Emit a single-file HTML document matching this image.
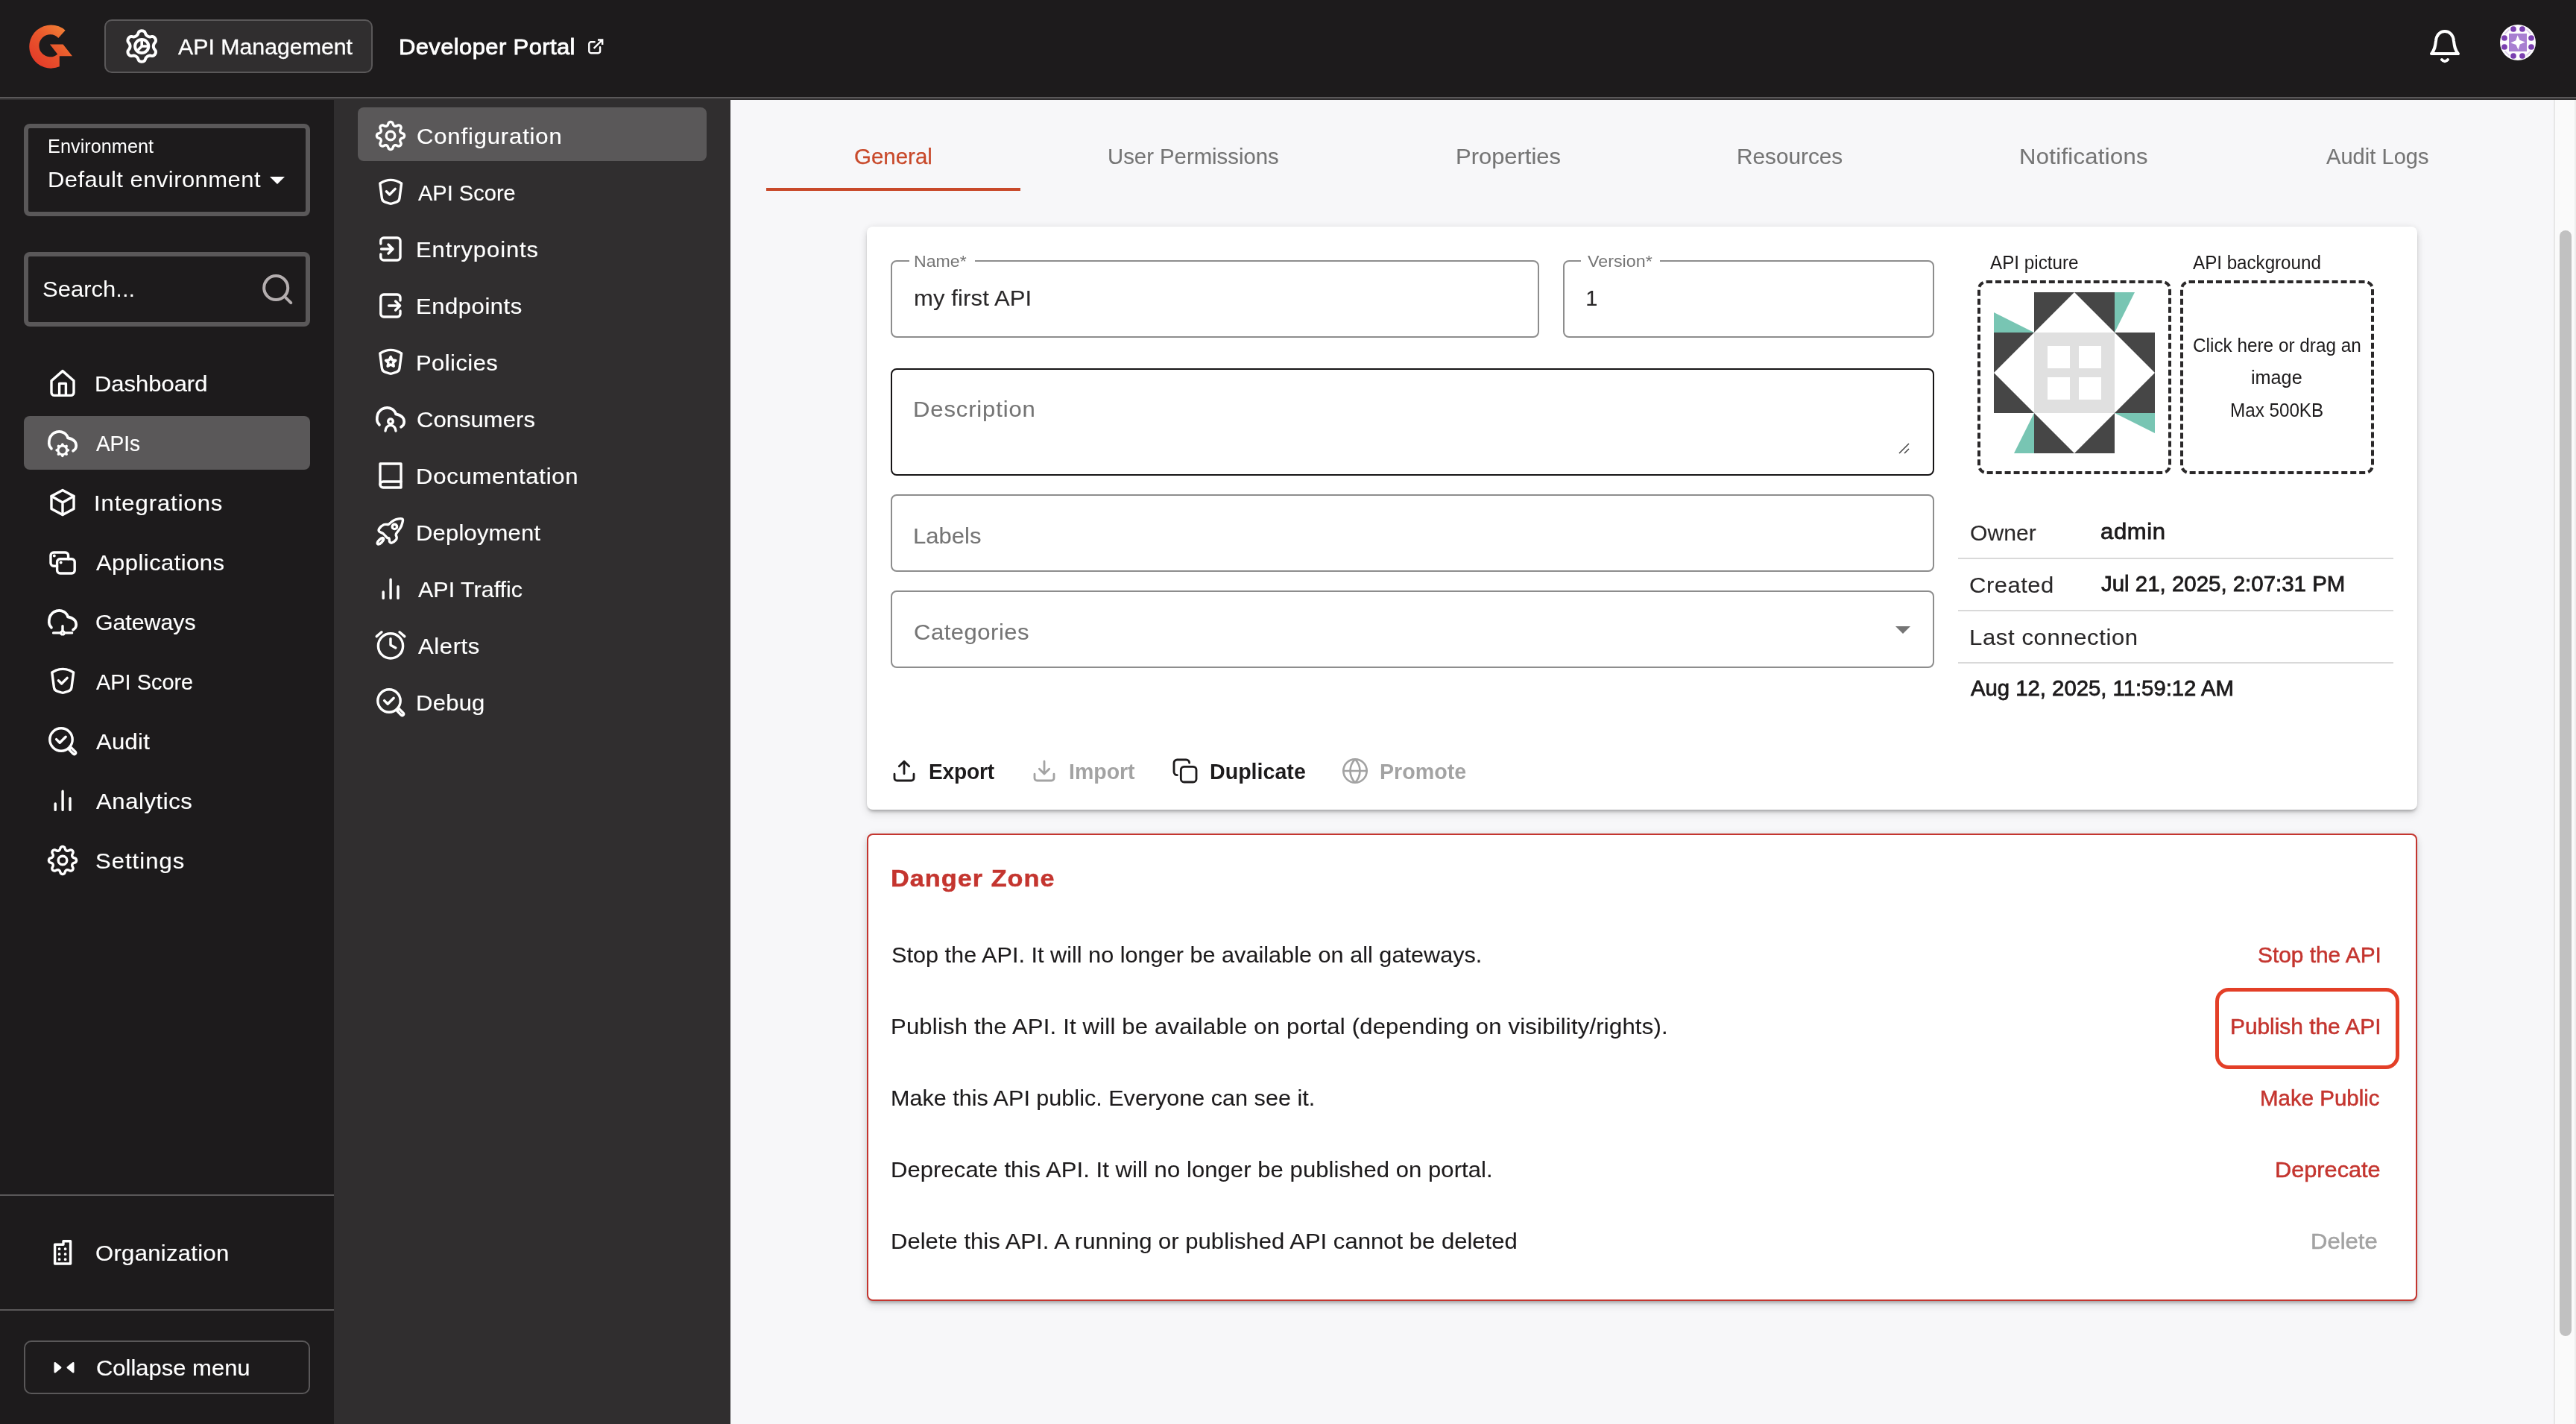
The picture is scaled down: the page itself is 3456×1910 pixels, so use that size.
<!DOCTYPE html>
<html lang="en">
<head>
<meta charset="utf-8">
<title>my first API - General - API Management</title>
<style>
html,body{margin:0;padding:0;}
@media (max-width:2000px){html{zoom:.5;}}
body{width:3456px;height:1910px;overflow:hidden;background:#f7f7f9;font-family:"Liberation Sans",sans-serif;position:relative;}
.abs,.t,.ic,.item,.box{position:absolute;}
.t{white-space:pre;display:block;transform-origin:0 0;}
header,nav.main,nav.sub,main{will-change:transform;}
.ic{display:block;overflow:visible;}
header{position:absolute;left:0;top:0;width:3456px;height:130px;background:#1d1b1c;border-bottom:2px solid #5a5859;box-shadow:0 2px 0 #302e2f;z-index:5;}
nav.main{position:absolute;left:0;top:134px;width:448px;height:1776px;background:#1d1b1c;}
nav.sub{position:absolute;left:448px;top:134px;width:532px;height:1776px;background:#302e2f;}
main{position:absolute;left:980px;top:134px;width:2446px;height:1776px;background:#f7f7f9;}
.item{height:72px;border-radius:8px;}
.item.sel{background:#5a5859;}
.apim{left:140px;top:26px;width:356px;height:68px;border:2px solid #5a5859;border-radius:10px;background:#302e2f;}
.env{left:32px;top:32px;width:372px;height:112px;border:6px solid #5a5859;border-radius:8px;}
.srch{left:32px;top:204px;width:372px;height:88px;border:6px solid #5a5859;border-radius:8px;}
.hr{position:absolute;left:0;width:448px;height:2px;background:#5a5859;}
.collapse{left:32px;top:1664px;width:380px;height:68px;border:2px solid #5a5859;border-radius:10px;}
.tri{position:absolute;width:0;height:0;border-left:10px solid transparent;border-right:10px solid transparent;border-top:10px solid #fff;}
.ink{position:absolute;left:48px;top:118px;width:341px;height:4px;background:#c8492a;}
.card{position:absolute;left:183px;top:170px;width:2080px;height:782px;background:#fff;border-radius:8px;box-shadow:0 4px 4px -2px rgba(0,0,0,.28),0 6px 12px 0 rgba(0,0,0,.10),0 0 10px 0 rgba(0,0,0,.07);}
.danger{position:absolute;left:183px;top:984px;width:2076px;height:623px;background:#fff;border:2px solid #c4352f;border-radius:8px;box-shadow:0 4px 4px -2px rgba(0,0,0,.28),0 6px 12px 0 rgba(0,0,0,.10),0 0 10px 0 rgba(0,0,0,.07);}
.fld{position:absolute;border:2px solid #8d8d8d;border-radius:8px;box-sizing:border-box;}
.fld.hov{border-color:#161415;}
.notch{position:absolute;top:-2px;height:2px;background:#fff;}
.drop{position:absolute;top:72px;width:252px;height:252px;border:4px dashed #2a2829;border-radius:12px;}
.line{position:absolute;left:1464px;width:584px;height:2px;background:#d9d9d9;}
.hl{position:absolute;left:1807px;top:205px;width:237px;height:99px;border:5px solid #e33f27;border-radius:18px;}
.sbar{position:absolute;left:3426px;top:134px;width:26px;height:1776px;background:#fafafa;border-left:2px solid #e7e7e7;border-right:2px solid #ededed;}
.thumb{position:absolute;left:6px;top:175px;width:16px;height:1483px;border-radius:8px;background:#c1c1c1;}
</style>
</head>
<body>
<header>
<svg class="abs" style="left:36px;top:28px" width="64" height="64" viewBox="36 28 64 64"><defs><linearGradient id="lg" gradientUnits="userSpaceOnUse" x1="48" y1="88" x2="92" y2="40"><stop offset="0" stop-color="#e43a29"/><stop offset="0.550" stop-color="#e9592c"/><stop offset="1" stop-color="#f28236"/></linearGradient></defs><path fill="url(#lg)" d="M87.600 40.700A29.100 29.100 0 1 0 79.800 89.300V75.300H97L84.600 59.400H66.900L77.240 72.640A15 15 0 1 1 78.300 51Z"/></svg>
<div class="box apim"></div>
<svg class="ic" style="left:166px;top:38px;color:#fff" width="48" height="48" viewBox="0 0 24 24" fill="none" stroke="currentColor" stroke-width="1.7" stroke-linecap="round" stroke-linejoin="round"><path d="M19.91 12.00L19.95 11.49L20.08 10.95L20.31 10.37L20.90 9.64L21.41 8.84L21.49 8.11L21.38 7.42L21.11 6.80L20.70 6.25L20.16 5.81L19.50 5.51L18.54 5.56L17.62 5.70L17.00 5.61L16.47 5.46L16.00 5.24L15.58 4.94L15.18 4.56L14.79 4.07L14.46 3.20L14.02 2.35L13.43 1.93L12.78 1.68L12.10 1.59L11.42 1.68L10.77 1.93L10.18 2.35L9.74 3.20L9.41 4.07L9.02 4.56L8.62 4.94L8.20 5.24L7.73 5.46L7.20 5.61L6.58 5.70L5.66 5.56L4.70 5.51L4.04 5.81L3.50 6.25L3.09 6.80L2.82 7.42L2.71 8.11L2.79 8.84L3.30 9.64L3.89 10.37L4.12 10.95L4.25 11.49L4.29 12.00L4.25 12.51L4.12 13.05L3.89 13.63L3.30 14.36L2.79 15.16L2.71 15.89L2.82 16.58L3.09 17.20L3.50 17.75L4.04 18.19L4.70 18.49L5.66 18.44L6.58 18.30L7.20 18.39L7.73 18.54L8.20 18.76L8.62 19.06L9.02 19.44L9.41 19.93L9.74 20.80L10.18 21.65L10.77 22.07L11.42 22.32L12.10 22.41L12.78 22.32L13.43 22.07L14.02 21.65L14.46 20.80L14.79 19.93L15.18 19.44L15.58 19.06L16.00 18.76L16.47 18.54L17.00 18.39L17.62 18.30L18.54 18.44L19.50 18.49L20.16 18.19L20.70 17.75L21.11 17.20L21.38 16.58L21.49 15.89L21.41 15.16L20.90 14.36L20.31 13.63L20.08 13.05L19.95 12.51Z" stroke-width="2"/><circle cx="12.1" cy="12" r="4.550" stroke-width="2"/><path d="M12.1 12V7.600M12.1 12H16.500M12.1 12L9 15.100" stroke-width="1.800"/></svg>
<svg class="abs" style="left:784px;top:46px" width="30" height="30" viewBox="784 46 30 30" fill="none" stroke="#fff" stroke-width="2.400"><path d="M797.700 56.300H792.900a2.600 2.600 0 0 0-2.600 2.600V68.600a2.600 2.600 0 0 0 2.600 2.600H802.500a2.600 2.600 0 0 0 2.600-2.600V63.200" stroke-linecap="round"/><path d="M796.700 64.800L808 53.500M802 53.500H808.200V59.900"/></svg>
<svg class="ic" style="left:3256px;top:38px;color:#fff" width="48" height="48" viewBox="0 0 24 24" fill="none" stroke="currentColor" stroke-width="1.7" stroke-linecap="round" stroke-linejoin="round"><path d="M3 17C5.200 14.600 5.600 12 6 8.500 6.300 4.600 8.600 2 12 2s5.700 2.600 6 6.500c.400 3.500.800 6.100 3 8.500z" stroke-width="2"/><path d="M10 21q2 2.300 4 0" stroke-width="2"/></svg>
<svg class="abs" style="left:3354px;top:33px" width="48" height="48" viewBox="0 0 48 48"><defs><clipPath id="avc"><circle cx="24" cy="24" r="24"/></clipPath></defs><g clip-path="url(#avc)"><rect width="48" height="48" fill="#fdfcfe"/><path d="M0 0L12 0 0 12zM48 0L36 0 48 12zM0 48L12 48 0 36zM48 48L36 48 48 36z" fill="#d6c3e6"/><path d="M6.500 12.500L12.500 6.500M35.500 6.500L41.500 12.500M6.500 35.500L12.500 41.500M35.500 41.500L41.500 35.500" stroke="#d9c8e8" stroke-width="1.600"/><rect x="12" y="12" width="24" height="24" fill="#a87fd1"/><path d="M23.600 14.200l2.900 6.600 7.300 2.800-7 3-2.300 7.200-3-6.700-7.200-2.700 7-3.200z" fill="#fff"/><g fill="#7a3fb0"><circle cx="18" cy="6" r="3.850"/><circle cx="30" cy="6" r="3.850"/><circle cx="18" cy="42" r="3.850"/><circle cx="30" cy="42" r="3.850"/><circle cx="6" cy="18" r="3.850"/><circle cx="6" cy="30" r="3.850"/><circle cx="42" cy="18" r="3.850"/><circle cx="42" cy="30" r="3.850"/></g></g></svg>
<span class="t" style="left:239.0px;top:48.5px;font-size:29px;line-height:29px;color:#fff;letter-spacing:-0.01px;transform:scaleX(1.045);-webkit-text-stroke:0.3px #fff;">API Management</span>
<span class="t" style="left:534.5px;top:48.5px;font-size:29px;line-height:29px;color:#fff;letter-spacing:0.33px;transform:scaleX(1.07);-webkit-text-stroke:0.8px #fff;">Developer Portal</span>
</header>
<nav class="main">
<div class="box env"></div><div class="tri" style="left:362px;top:103px"></div>
<div class="box srch"></div>
<svg class="abs" style="left:346px;top:228px" width="52" height="52" viewBox="346 228 52 52" fill="none" stroke="#b4aeaf" stroke-width="4" stroke-linecap="round"><circle cx="370.200" cy="252.100" r="16"/><path d="M381.700 263.600L390.300 272.200"/></svg>
<div class="item" style="left:32px;top:344px;width:384px"></div><svg class="ic" style="left:60px;top:356px;color:#fff" width="48" height="48" viewBox="0 0 24 24" fill="none" stroke="currentColor" stroke-width="1.7" stroke-linecap="round" stroke-linejoin="round"><path d="M4.500 10.400L12 3.800l7.500 6.600v7.800a2 2 0 01-2 2h-11a2 2 0 01-2-2z"/><path d="M9.800 20.200v-8h4.400v8"/></svg><div class="item sel" style="left:32px;top:424px;width:384px"></div><svg class="ic" style="left:60px;top:436px;color:#fff" width="48" height="48" viewBox="0 0 24 24" fill="none" stroke="currentColor" stroke-width="1.7" stroke-linecap="round" stroke-linejoin="round"><path d="M4.48 15.90C4.26 15.53 3.38 14.56 3.13 13.70C2.88 12.84 2.84 11.72 2.96 10.73C3.08 9.74 3.31 8.68 3.87 7.78C4.43 6.88 5.34 5.88 6.32 5.32C7.30 4.76 8.66 4.41 9.77 4.41C10.88 4.41 12.10 4.84 12.96 5.32C13.82 5.80 14.49 6.73 14.93 7.29C15.37 7.85 15.49 8.46 15.60 8.70" stroke-width="1.850"/><path d="M15.60 8.70C16.02 8.83 17.32 9.08 18.10 9.50C18.88 9.92 19.80 10.50 20.30 11.20C20.80 11.90 21.05 12.92 21.10 13.70C21.15 14.48 20.95 15.29 20.60 15.90C20.25 16.51 19.27 17.12 19.00 17.37" stroke-width="1.850"/><path d="M16.62 16.90L16.56 16.59L16.39 16.31L15.99 16.09L15.57 15.92L15.37 15.72L15.24 15.52L15.18 15.28L15.19 15.00L15.36 14.59L15.49 14.14L15.41 13.82L15.23 13.57L14.98 13.39L14.66 13.31L14.21 13.44L13.80 13.61L13.52 13.62L13.28 13.56L13.08 13.43L12.88 13.23L12.71 12.81L12.49 12.41L12.21 12.24L11.90 12.18L11.59 12.24L11.31 12.41L11.09 12.81L10.92 13.23L10.72 13.43L10.52 13.56L10.28 13.62L10.00 13.61L9.59 13.44L9.14 13.31L8.82 13.39L8.57 13.57L8.39 13.82L8.31 14.14L8.44 14.59L8.61 15.00L8.62 15.28L8.56 15.52L8.43 15.72L8.23 15.92L7.81 16.09L7.41 16.31L7.24 16.59L7.18 16.90L7.24 17.21L7.41 17.49L7.81 17.71L8.23 17.88L8.43 18.08L8.56 18.28L8.62 18.52L8.61 18.80L8.44 19.21L8.31 19.66L8.39 19.98L8.57 20.23L8.82 20.41L9.14 20.49L9.59 20.36L10.00 20.19L10.28 20.18L10.52 20.24L10.72 20.37L10.92 20.57L11.09 20.99L11.31 21.39L11.59 21.56L11.90 21.62L12.21 21.56L12.49 21.39L12.71 20.99L12.88 20.57L13.08 20.37L13.28 20.24L13.52 20.18L13.80 20.19L14.21 20.36L14.66 20.49L14.98 20.41L15.23 20.23L15.41 19.98L15.49 19.66L15.36 19.21L15.19 18.80L15.18 18.52L15.24 18.28L15.37 18.08L15.57 17.88L15.99 17.71L16.39 17.49L16.56 17.21ZM9.70 16.90a2.2 2.2 0 1 0 4.4 0a2.2 2.2 0 1 0 -4.4 0Z" fill="currentColor" fill-rule="evenodd" stroke="none"/></svg><div class="item" style="left:32px;top:504px;width:384px"></div><svg class="ic" style="left:60px;top:516px;color:#fff" width="48" height="48" viewBox="0 0 24 24" fill="none" stroke="currentColor" stroke-width="1.7" stroke-linecap="round" stroke-linejoin="round"><path d="M12 3.700l7.500 4.100v8.400L12 20.300l-7.500-4.100V7.800z"/><path d="M4.500 7.800L12 12l7.500-4.200M12 12v8.300"/></svg><div class="item" style="left:32px;top:584px;width:384px"></div><svg class="ic" style="left:60px;top:596px;color:#fff" width="48" height="48" viewBox="0 0 24 24" fill="none" stroke="currentColor" stroke-width="1.7" stroke-linecap="round" stroke-linejoin="round"><path d="M8.300 14.600H6a2 2 0 01-2-2V7.500a2 2 0 012-2h7.800a2 2 0 012 2v2.400"/><rect x="8.300" y="9.900" width="11.800" height="9.600" rx="2"/><path d="M6.400 7.800h.01M10.800 12.300h.01" stroke-width="2"/></svg><div class="item" style="left:32px;top:664px;width:384px"></div><svg class="ic" style="left:60px;top:676px;color:#fff" width="48" height="48" viewBox="0 0 24 24" fill="none" stroke="currentColor" stroke-width="1.7" stroke-linecap="round" stroke-linejoin="round"><path d="M4.48 15.90C4.26 15.53 3.38 14.56 3.13 13.70C2.88 12.84 2.84 11.72 2.96 10.73C3.08 9.74 3.31 8.68 3.87 7.78C4.43 6.88 5.34 5.88 6.32 5.32C7.30 4.76 8.66 4.41 9.77 4.41C10.88 4.41 12.10 4.84 12.96 5.32C13.82 5.80 14.49 6.73 14.93 7.29C15.37 7.85 15.49 8.46 15.60 8.70" stroke-width="1.850"/><path d="M15.60 8.70C16.02 8.83 17.32 9.08 18.10 9.50C18.88 9.92 19.80 10.50 20.30 11.20C20.80 11.90 21.05 12.92 21.10 13.70C21.15 14.48 20.95 15.29 20.60 15.90C20.25 16.51 19.27 17.12 19.00 17.37" stroke-width="1.850"/><path d="M12 14.800V18.300M5.800 19.450H10.800M13.200 19.450H18.300" stroke-width="1.700"/><circle cx="12" cy="19.450" r="1.100" stroke-width="1.500"/></svg><div class="item" style="left:32px;top:744px;width:384px"></div><svg class="ic" style="left:60px;top:756px;color:#fff" width="48" height="48" viewBox="0 0 24 24" fill="none" stroke="currentColor" stroke-width="1.7" stroke-linecap="round" stroke-linejoin="round"><path d="M4.900 6Q12.100 1.400 19.300 6L18 16Q17.700 18 15.800 18.600L12.900 19.500Q12.100 19.750 11.300 19.500L8.400 18.600Q6.500 18 6.200 16Z"/><path d="M9.200 11.400l2.100 2.100 3.800-3.800"/></svg><div class="item" style="left:32px;top:824px;width:384px"></div><svg class="ic" style="left:60px;top:836px;color:#fff" width="48" height="48" viewBox="0 0 24 24" fill="none" stroke="currentColor" stroke-width="1.7" stroke-linecap="round" stroke-linejoin="round"><circle cx="11" cy="11" r="7.600"/><path d="M7.800 10.800l2.300 2.300 4-4"/><path d="M16.300 17.700l1.400-1.400 2.900 2.900a1 1 0 01-1.400 1.400z"/></svg><div class="item" style="left:32px;top:904px;width:384px"></div><svg class="ic" style="left:60px;top:916px;color:#fff" width="48" height="48" viewBox="0 0 24 24" fill="none" stroke="currentColor" stroke-width="1.7" stroke-linecap="round" stroke-linejoin="round"><path d="M7.100 18.200v-4.200M12.050 18.200V5.600M17 18.200v-7.800" stroke-width="1.700"/></svg><div class="item" style="left:32px;top:984px;width:384px"></div><svg class="ic" style="left:60px;top:996px;color:#fff" width="48" height="48" viewBox="0 0 24 24" fill="none" stroke="currentColor" stroke-width="1.7" stroke-linecap="round" stroke-linejoin="round"><circle cx="12" cy="12" r="2.900"/><path d="M21.29 12.00L21.22 11.55L21.03 11.11L20.69 10.71L19.98 10.41L19.27 10.18L18.89 9.91L18.63 9.63L18.46 9.33L18.37 8.99L18.35 8.60L18.43 8.15L18.77 7.48L19.06 6.77L19.01 6.24L18.84 5.80L18.57 5.43L18.20 5.16L17.76 4.99L17.23 4.94L16.52 5.23L15.85 5.57L15.40 5.65L15.01 5.63L14.67 5.54L14.37 5.37L14.09 5.11L13.82 4.73L13.59 4.02L13.29 3.31L12.89 2.97L12.45 2.78L12.00 2.71L11.55 2.78L11.11 2.97L10.71 3.31L10.41 4.02L10.18 4.73L9.91 5.11L9.63 5.37L9.33 5.54L8.99 5.63L8.60 5.65L8.15 5.57L7.48 5.23L6.77 4.94L6.24 4.99L5.80 5.16L5.43 5.43L5.16 5.80L4.99 6.24L4.94 6.77L5.23 7.48L5.57 8.15L5.65 8.60L5.63 8.99L5.54 9.33L5.37 9.63L5.11 9.91L4.73 10.18L4.02 10.41L3.31 10.71L2.97 11.11L2.78 11.55L2.71 12.00L2.78 12.45L2.97 12.89L3.31 13.29L4.02 13.59L4.73 13.82L5.11 14.09L5.37 14.37L5.54 14.67L5.63 15.01L5.65 15.40L5.57 15.85L5.23 16.52L4.94 17.23L4.99 17.76L5.16 18.20L5.43 18.57L5.80 18.84L6.24 19.01L6.77 19.06L7.48 18.77L8.15 18.43L8.60 18.35L8.99 18.37L9.33 18.46L9.63 18.63L9.91 18.89L10.18 19.27L10.41 19.98L10.71 20.69L11.11 21.03L11.55 21.22L12.00 21.29L12.45 21.22L12.89 21.03L13.29 20.69L13.59 19.98L13.82 19.27L14.09 18.89L14.37 18.63L14.67 18.46L15.01 18.37L15.40 18.35L15.85 18.43L16.52 18.77L17.23 19.06L17.76 19.01L18.20 18.84L18.57 18.57L18.84 18.20L19.01 17.76L19.06 17.23L18.77 16.52L18.43 15.85L18.35 15.40L18.37 15.01L18.46 14.67L18.63 14.37L18.89 14.09L19.27 13.82L19.98 13.59L20.69 13.29L21.03 12.89L21.22 12.45Z"/></svg>
<div class="hr" style="top:1468px"></div>
<svg class="ic" style="left:60px;top:1523px;color:#fff" width="48" height="48" viewBox="0 0 24 24" fill="none" stroke="currentColor" stroke-width="1.7" stroke-linecap="round" stroke-linejoin="round"><path d="M6.800 19V6.100h5.700V3.900h4.800V19z"/><path d="M9.800 9.100h.01M13.800 9.100h.01M9.800 12.600h.01M13.800 12.600h.01M9.800 16.100h.01M13.800 16.100h.01" stroke-width="1.900"/></svg>
<div class="hr" style="top:1622px"></div>
<div class="box collapse"></div>
<svg class="ic" style="left:62px;top:1676px;color:#fff" width="48" height="48" viewBox="0 0 24 24" fill="none" stroke="currentColor" stroke-width="1.7" stroke-linecap="round" stroke-linejoin="round"><path d="M5.900 9.100l3.700 3-3.700 3zM18.100 9.100l-3.700 3 3.700 3z" fill="currentColor" stroke-width="1.300"/></svg>
<span class="t" style="left:64.0px;top:49.8px;font-size:25px;line-height:25px;color:#fff;letter-spacing:0.01px;transform:scaleX(1.012);">Environment</span>
<span class="t" style="left:63.5px;top:92.5px;font-size:29px;line-height:29px;color:#fff;letter-spacing:0.41px;transform:scaleX(1.07);">Default environment</span>
<span class="t" style="left:56.6px;top:240.2px;font-size:29px;line-height:29px;color:#fff;letter-spacing:0.01px;transform:scaleX(1.069);">Search...</span>
<span class="t" style="left:126.5px;top:366.5px;font-size:29px;line-height:29px;color:#fff;transform:scaleX(1.067);-webkit-text-stroke:0.15px #fff;">Dashboard</span>
<span class="t" style="left:129.0px;top:446.5px;font-size:29px;line-height:29px;color:#fff;letter-spacing:-0.15px;transform:scaleX(0.97);-webkit-text-stroke:0.15px #fff;">APIs</span>
<span class="t" style="left:126.2px;top:526.5px;font-size:29px;line-height:29px;color:#fff;letter-spacing:0.87px;transform:scaleX(1.07);-webkit-text-stroke:0.15px #fff;">Integrations</span>
<span class="t" style="left:129.0px;top:606.5px;font-size:29px;line-height:29px;color:#fff;letter-spacing:0.4px;transform:scaleX(1.07);-webkit-text-stroke:0.15px #fff;">Applications</span>
<span class="t" style="left:127.5px;top:686.5px;font-size:29px;line-height:29px;color:#fff;letter-spacing:-0.01px;transform:scaleX(1.044);-webkit-text-stroke:0.15px #fff;">Gateways</span>
<span class="t" style="left:129.0px;top:766.5px;font-size:29px;line-height:29px;color:#fff;transform:scaleX(0.997);-webkit-text-stroke:0.15px #fff;">API Score</span>
<span class="t" style="left:129.0px;top:846.5px;font-size:29px;line-height:29px;color:#fff;letter-spacing:0.26px;transform:scaleX(1.07);-webkit-text-stroke:0.15px #fff;">Audit</span>
<span class="t" style="left:129.0px;top:926.5px;font-size:29px;line-height:29px;color:#fff;letter-spacing:0.55px;transform:scaleX(1.07);-webkit-text-stroke:0.15px #fff;">Analytics</span>
<span class="t" style="left:127.6px;top:1006.5px;font-size:29px;line-height:29px;color:#fff;letter-spacing:0.95px;transform:scaleX(1.07);-webkit-text-stroke:0.15px #fff;">Settings</span>
<span class="t" style="left:127.6px;top:1532.5px;font-size:29px;line-height:29px;color:#fff;letter-spacing:0.28px;transform:scaleX(1.07);-webkit-text-stroke:0.15px #fff;">Organization</span>
<span class="t" style="left:128.5px;top:1686.5px;font-size:29px;line-height:29px;color:#fff;transform:scaleX(1.068);-webkit-text-stroke:0.15px #fff;">Collapse menu</span>
</nav>
<nav class="sub">
<div class="item sel" style="left:32px;top:10px;width:468px"></div><svg class="ic" style="left:52px;top:24px;color:#fff" width="48" height="48" viewBox="0 0 24 24" fill="none" stroke="currentColor" stroke-width="1.7" stroke-linecap="round" stroke-linejoin="round"><circle cx="12" cy="12" r="2.900"/><path d="M21.29 12.00L21.22 11.55L21.03 11.11L20.69 10.71L19.98 10.41L19.27 10.18L18.89 9.91L18.63 9.63L18.46 9.33L18.37 8.99L18.35 8.60L18.43 8.15L18.77 7.48L19.06 6.77L19.01 6.24L18.84 5.80L18.57 5.43L18.20 5.16L17.76 4.99L17.23 4.94L16.52 5.23L15.85 5.57L15.40 5.65L15.01 5.63L14.67 5.54L14.37 5.37L14.09 5.11L13.82 4.73L13.59 4.02L13.29 3.31L12.89 2.97L12.45 2.78L12.00 2.71L11.55 2.78L11.11 2.97L10.71 3.31L10.41 4.02L10.18 4.73L9.91 5.11L9.63 5.37L9.33 5.54L8.99 5.63L8.60 5.65L8.15 5.57L7.48 5.23L6.77 4.94L6.24 4.99L5.80 5.16L5.43 5.43L5.16 5.80L4.99 6.24L4.94 6.77L5.23 7.48L5.57 8.15L5.65 8.60L5.63 8.99L5.54 9.33L5.37 9.63L5.11 9.91L4.73 10.18L4.02 10.41L3.31 10.71L2.97 11.11L2.78 11.55L2.71 12.00L2.78 12.45L2.97 12.89L3.31 13.29L4.02 13.59L4.73 13.82L5.11 14.09L5.37 14.37L5.54 14.67L5.63 15.01L5.65 15.40L5.57 15.85L5.23 16.52L4.94 17.23L4.99 17.76L5.16 18.20L5.43 18.57L5.80 18.84L6.24 19.01L6.77 19.06L7.48 18.77L8.15 18.43L8.60 18.35L8.99 18.37L9.33 18.46L9.63 18.63L9.91 18.89L10.18 19.27L10.41 19.98L10.71 20.69L11.11 21.03L11.55 21.22L12.00 21.29L12.45 21.22L12.89 21.03L13.29 20.69L13.59 19.98L13.82 19.27L14.09 18.89L14.37 18.63L14.67 18.46L15.01 18.37L15.40 18.35L15.85 18.43L16.52 18.77L17.23 19.06L17.76 19.01L18.20 18.84L18.57 18.57L18.84 18.20L19.01 17.76L19.06 17.23L18.77 16.52L18.43 15.85L18.35 15.40L18.37 15.01L18.46 14.67L18.63 14.37L18.89 14.09L19.27 13.82L19.98 13.59L20.69 13.29L21.03 12.89L21.22 12.45Z"/></svg><div class="item" style="left:32px;top:86px;width:468px"></div><svg class="ic" style="left:52px;top:100px;color:#fff" width="48" height="48" viewBox="0 0 24 24" fill="none" stroke="currentColor" stroke-width="1.7" stroke-linecap="round" stroke-linejoin="round"><path d="M4.900 6Q12.100 1.400 19.300 6L18 16Q17.700 18 15.800 18.600L12.900 19.500Q12.100 19.750 11.300 19.500L8.400 18.600Q6.500 18 6.200 16Z"/><path d="M9.200 11.400l2.100 2.100 3.800-3.800"/></svg><div class="item" style="left:32px;top:162px;width:468px"></div><svg class="ic" style="left:52px;top:176px;color:#fff" width="48" height="48" viewBox="0 0 24 24" fill="none" stroke="currentColor" stroke-width="1.7" stroke-linecap="round" stroke-linejoin="round"><path d="M5.400 8.500V6.500a2 2 0 012-2h9.100a2 2 0 012 2v11a2 2 0 01-2 2H7.400a2 2 0 01-2-2v-2"/><path d="M5.800 12h7.700m-3-3l3 3-3 3"/></svg><div class="item" style="left:32px;top:238px;width:468px"></div><svg class="ic" style="left:52px;top:252px;color:#fff" width="48" height="48" viewBox="0 0 24 24" fill="none" stroke="currentColor" stroke-width="1.7" stroke-linecap="round" stroke-linejoin="round"><path d="M18.500 8.500V6.500a2 2 0 00-2-2H7.400a2 2 0 00-2 2v11a2 2 0 002 2h9.100a2 2 0 002-2v-2"/><path d="M10.800 12h7.500m-3-3l3 3-3 3"/></svg><div class="item" style="left:32px;top:314px;width:468px"></div><svg class="ic" style="left:52px;top:328px;color:#fff" width="48" height="48" viewBox="0 0 24 24" fill="none" stroke="currentColor" stroke-width="1.7" stroke-linecap="round" stroke-linejoin="round"><path d="M4.900 6Q12.100 1.400 19.300 6L18 16Q17.700 18 15.800 18.600L12.900 19.500Q12.100 19.750 11.300 19.500L8.400 18.600Q6.500 18 6.200 16Z"/><path d="M12.100 8.300l1 2.100 2.300.300-1.700 1.600.450 2.300-2.050-1.150-2.050 1.150.450-2.300-1.700-1.600 2.300-.300z"/></svg><div class="item" style="left:32px;top:390px;width:468px"></div><svg class="ic" style="left:52px;top:404px;color:#fff" width="48" height="48" viewBox="0 0 24 24" fill="none" stroke="currentColor" stroke-width="1.7" stroke-linecap="round" stroke-linejoin="round"><path d="M4.48 15.90C4.26 15.53 3.38 14.56 3.13 13.70C2.88 12.84 2.84 11.72 2.96 10.73C3.08 9.74 3.31 8.68 3.87 7.78C4.43 6.88 5.34 5.88 6.32 5.32C7.30 4.76 8.66 4.41 9.77 4.41C10.88 4.41 12.10 4.84 12.96 5.32C13.82 5.80 14.49 6.73 14.93 7.29C15.37 7.85 15.49 8.46 15.60 8.70" stroke-width="1.850"/><path d="M15.60 8.70C16.02 8.83 17.32 9.08 18.10 9.50C18.88 9.92 19.80 10.50 20.30 11.20C20.80 11.90 21.05 12.92 21.10 13.70C21.15 14.48 20.95 15.29 20.60 15.90C20.25 16.51 19.27 17.12 19.00 17.37" stroke-width="1.850"/><circle cx="12" cy="13.600" r="1.650" stroke-width="1.700"/><path d="M8.500 20A3.500 3.800 0 0 1 15.500 20" stroke-width="1.700"/></svg><div class="item" style="left:32px;top:466px;width:468px"></div><svg class="ic" style="left:52px;top:480px;color:#fff" width="48" height="48" viewBox="0 0 24 24" fill="none" stroke="currentColor" stroke-width="1.7" stroke-linecap="round" stroke-linejoin="round"><path d="M5 4h14v16H7a2 2 0 01-2-2z"/><path d="M5 18a2 2 0 012-2h12"/></svg><div class="item" style="left:32px;top:542px;width:468px"></div><svg class="ic" style="left:52px;top:556px;color:#fff" width="48" height="48" viewBox="0 0 24 24" fill="none" stroke="currentColor" stroke-width="1.7" stroke-linecap="round" stroke-linejoin="round"><path d="M20.00 3.10C19.32 2.67 16.91 3.00 15.70 3.30C14.49 3.60 13.60 4.34 12.75 4.90C11.90 5.46 11.48 6.33 10.60 6.65C9.72 6.98 8.47 6.39 7.45 6.85C6.43 7.31 5.03 8.64 4.50 9.40C3.98 10.16 3.94 10.88 4.30 11.40C4.66 11.93 6.06 12.17 6.65 12.55C7.24 12.93 7.32 13.17 7.85 13.70C8.38 14.22 9.28 15.30 9.80 15.70C10.33 16.10 10.73 15.65 11.00 16.10C11.27 16.55 11.08 17.92 11.40 18.40C11.72 18.88 12.23 19.25 12.95 19.00C13.67 18.75 15.17 17.52 15.70 16.90C16.23 16.28 16.10 15.93 16.10 15.30C16.10 14.67 15.28 14.15 15.70 13.10C16.12 12.05 17.92 10.20 18.60 9.00C19.28 7.80 19.57 6.88 19.80 5.90C20.03 4.92 20.68 3.53 20.00 3.10Z"/><circle cx="14.700" cy="8.200" r="1.600"/><ellipse cx="5.200" cy="17.900" rx="2.700" ry="1.150" transform="rotate(-45 5.200 17.900)"/></svg><div class="item" style="left:32px;top:618px;width:468px"></div><svg class="ic" style="left:52px;top:632px;color:#fff" width="48" height="48" viewBox="0 0 24 24" fill="none" stroke="currentColor" stroke-width="1.7" stroke-linecap="round" stroke-linejoin="round"><path d="M7.100 18.200v-4.200M12.050 18.200V5.600M17 18.200v-7.800" stroke-width="1.700"/></svg><div class="item" style="left:32px;top:694px;width:468px"></div><svg class="ic" style="left:52px;top:708px;color:#fff" width="48" height="48" viewBox="0 0 24 24" fill="none" stroke="currentColor" stroke-width="1.7" stroke-linecap="round" stroke-linejoin="round"><circle cx="12" cy="12.200" r="8.300"/><path d="M12 7.400v4.200l3.400 1.900"/><path d="M2.600 5.800L6 2.900M21.400 5.800L18 2.900"/></svg><div class="item" style="left:32px;top:770px;width:468px"></div><svg class="ic" style="left:52px;top:784px;color:#fff" width="48" height="48" viewBox="0 0 24 24" fill="none" stroke="currentColor" stroke-width="1.7" stroke-linecap="round" stroke-linejoin="round"><circle cx="11" cy="11" r="7.600"/><path d="M7.800 10.800l2.300 2.300 4-4"/><path d="M16.300 17.700l1.400-1.400 2.900 2.900a1 1 0 01-1.400 1.400z"/></svg>
<span class="t" style="left:110.9px;top:34.5px;font-size:29px;line-height:29px;color:#fff;letter-spacing:0.79px;transform:scaleX(1.07);-webkit-text-stroke:0.15px #fff;">Configuration</span>
<span class="t" style="left:112.5px;top:110.5px;font-size:29px;line-height:29px;color:#fff;transform:scaleX(1.001);-webkit-text-stroke:0.15px #fff;">API Score</span>
<span class="t" style="left:110.0px;top:186.5px;font-size:29px;line-height:29px;color:#fff;letter-spacing:0.83px;transform:scaleX(1.07);-webkit-text-stroke:0.15px #fff;">Entrypoints</span>
<span class="t" style="left:110.0px;top:262.5px;font-size:29px;line-height:29px;color:#fff;letter-spacing:0.5px;transform:scaleX(1.07);-webkit-text-stroke:0.15px #fff;">Endpoints</span>
<span class="t" style="left:110.0px;top:338.5px;font-size:29px;line-height:29px;color:#fff;letter-spacing:0.39px;transform:scaleX(1.07);-webkit-text-stroke:0.15px #fff;">Policies</span>
<span class="t" style="left:110.9px;top:414.5px;font-size:29px;line-height:29px;color:#fff;letter-spacing:0.03px;transform:scaleX(1.07);-webkit-text-stroke:0.15px #fff;">Consumers</span>
<span class="t" style="left:110.0px;top:490.5px;font-size:29px;line-height:29px;color:#fff;letter-spacing:0.69px;transform:scaleX(1.07);-webkit-text-stroke:0.15px #fff;">Documentation</span>
<span class="t" style="left:110.0px;top:566.5px;font-size:29px;line-height:29px;color:#fff;letter-spacing:0.15px;transform:scaleX(1.07);-webkit-text-stroke:0.15px #fff;">Deployment</span>
<span class="t" style="left:112.5px;top:642.5px;font-size:29px;line-height:29px;color:#fff;transform:scaleX(1.051);-webkit-text-stroke:0.15px #fff;">API Traffic</span>
<span class="t" style="left:112.5px;top:718.5px;font-size:29px;line-height:29px;color:#fff;letter-spacing:0.56px;transform:scaleX(1.07);-webkit-text-stroke:0.15px #fff;">Alerts</span>
<span class="t" style="left:110.0px;top:794.5px;font-size:29px;line-height:29px;color:#fff;letter-spacing:0.22px;transform:scaleX(1.07);-webkit-text-stroke:0.15px #fff;">Debug</span>
</nav>
<main>
<div class="ink"></div>
<span class="t" style="left:166.0px;top:61.5px;font-size:29px;line-height:29px;color:#c8492a;transform:scaleX(1.016);-webkit-text-stroke:0.25px #c8492a;">General</span>
<span class="t" style="left:506.3px;top:61.5px;font-size:29px;line-height:29px;color:#757575;transform:scaleX(1.011);-webkit-text-stroke:0.1px #757575;">User Permissions</span>
<span class="t" style="left:972.5px;top:61.5px;font-size:29px;line-height:29px;color:#757575;transform:scaleX(1.067);-webkit-text-stroke:0.1px #757575;">Properties</span>
<span class="t" style="left:1349.6px;top:61.5px;font-size:29px;line-height:29px;color:#757575;transform:scaleX(1.026);-webkit-text-stroke:0.1px #757575;">Resources</span>
<span class="t" style="left:1728.5px;top:61.5px;font-size:29px;line-height:29px;color:#757575;letter-spacing:0.28px;transform:scaleX(1.07);-webkit-text-stroke:0.1px #757575;">Notifications</span>
<span class="t" style="left:2141.0px;top:61.5px;font-size:29px;line-height:29px;color:#757575;letter-spacing:0.01px;transform:scaleX(1.003);-webkit-text-stroke:0.1px #757575;">Audit Logs</span>
<section class="card">
<div class="fld" style="left:32px;top:45px;width:870px;height:104px"><div class="notch" style="left:23px;width:88px"></div></div>
<div class="fld" style="left:934px;top:45px;width:498px;height:104px"><div class="notch" style="left:22px;width:106px"></div></div>
<div class="fld hov" style="left:32px;top:190px;width:1400px;height:144px"></div>
<svg class="abs" style="left:1384px;top:290px" width="16" height="16" viewBox="0 0 16 16" stroke="#444" stroke-width="1.500" fill="none"><path d="M1 14L14 1M8 14L14 8"/></svg>
<div class="fld" style="left:32px;top:359px;width:1400px;height:104px"></div>
<div class="fld" style="left:32px;top:488px;width:1400px;height:104px"></div>
<div class="tri" style="left:1380px;top:536px;border-top-color:#757575"></div>
<div class="drop" style="left:1490px"></div>
<svg class="abs" style="left:1512px;top:88px" width="216" height="216" viewBox="0 0 216 216"><g fill="#464646"><rect x="54" y="0" width="108" height="54"/><rect x="54" y="162" width="108" height="54"/><rect x="0" y="54" width="54" height="108"/><rect x="162" y="54" width="54" height="108"/></g><path d="M108 0L216 108 108 216 0 108z" fill="#fff"/><rect x="54" y="54" width="108" height="108" fill="#e0e0e0"/><g fill="#fff"><rect x="72" y="72" width="30" height="30"/><rect x="114" y="72" width="30" height="30"/><rect x="72" y="114" width="30" height="30"/><rect x="114" y="114" width="30" height="30"/></g><g fill="#78c5b3"><path d="M162 0h27L162 54z"/><path d="M216 162v27L162 162z"/><path d="M54 216H27L54 162z"/><path d="M0 54V27L54 54z"/></g></svg>
<div class="drop" style="left:1762px"></div>
<div class="line" style="top:444px"></div>
<div class="line" style="top:514px"></div>
<div class="line" style="top:584px"></div>
<svg class="ic" style="left:29.75px;top:709.75px;color:#1d1b1c" width="40" height="40" viewBox="0 0 24 24" fill="none" stroke="currentColor" stroke-width="1.7" stroke-linecap="round" stroke-linejoin="round"><path d="M4.200 14.500v3.300a2 2 0 002 2h11.600a2 2 0 002-2v-3.300"/><path d="M12 14.300V4.400M8 8.300l4-4 4 4"/></svg>
<svg class="ic" style="left:217.75px;top:709.75px;color:#a3a3a3" width="40" height="40" viewBox="0 0 24 24" fill="none" stroke="currentColor" stroke-width="1.7" stroke-linecap="round" stroke-linejoin="round"><path d="M4.200 14.500v3.300a2 2 0 002 2h11.600a2 2 0 002-2v-3.300"/><path d="M12 4.300v10M8 10.400l4 4 4-4"/></svg>
<svg class="ic" style="left:406.5px;top:709.75px;color:#1d1b1c" width="40" height="40" viewBox="0 0 24 24" fill="none" stroke="currentColor" stroke-width="1.7" stroke-linecap="round" stroke-linejoin="round"><rect x="8.600" y="8.600" width="12.400" height="12.400" rx="2.600"/><path d="M15.400 5.600A2.600 2.600 0 0012.800 3H5.600A2.600 2.600 0 003 5.600v7.200a2.600 2.600 0 002.600 2.600"/></svg>
<svg class="ic" style="left:635px;top:710px;color:#a3a3a3" width="40" height="40" viewBox="0 0 24 24" fill="none" stroke="currentColor" stroke-width="1.6" stroke-linecap="round" stroke-linejoin="round"><circle cx="12" cy="12" r="9.400"/><path d="M2.600 12h18.800M12 2.600c2.600 2.600 3.900 5.900 3.900 9.400s-1.300 6.800-3.900 9.400c-2.600-2.600-3.900-5.900-3.900-9.400S9.400 5.200 12 2.600z"/></svg>
<span class="t" style="left:62.7px;top:36.4px;font-size:22px;line-height:22px;color:#757575;transform:scaleX(1.051);">Name*</span>
<span class="t" style="left:62.5px;top:81.5px;font-size:29px;line-height:29px;color:#2a2829;letter-spacing:0.11px;transform:scaleX(1.07);-webkit-text-stroke:0.1px #2a2829;">my first API</span>
<span class="t" style="left:966.5px;top:36.4px;font-size:22px;line-height:22px;color:#757575;letter-spacing:-0.01px;transform:scaleX(1.06);">Version*</span>
<span class="t" style="left:964.3px;top:81.5px;font-size:29px;line-height:29px;color:#2a2829;-webkit-text-stroke:0.1px #2a2829;">1</span>
<span class="t" style="left:62.0px;top:231.0px;font-size:29px;line-height:29px;color:#757575;letter-spacing:0.81px;transform:scaleX(1.07);-webkit-text-stroke:0.1px #757575;">Description</span>
<span class="t" style="left:62.0px;top:400.5px;font-size:29px;line-height:29px;color:#757575;letter-spacing:0.02px;transform:scaleX(1.07);-webkit-text-stroke:0.1px #757575;">Labels</span>
<span class="t" style="left:62.9px;top:529.5px;font-size:29px;line-height:29px;color:#757575;letter-spacing:0.47px;transform:scaleX(1.07);-webkit-text-stroke:0.1px #757575;">Categories</span>
<span class="t" style="left:1507.0px;top:35.8px;font-size:25px;line-height:25px;color:#1d1b1c;letter-spacing:-0.01px;transform:scaleX(0.97);">API picture</span>
<span class="t" style="left:1779.0px;top:35.8px;font-size:25px;line-height:25px;color:#1d1b1c;letter-spacing:-0.05px;transform:scaleX(0.97);">API background</span>
<span class="t" style="left:1779.2px;top:146.8px;font-size:25px;line-height:25px;color:#1d1b1c;transform:scaleX(0.973);">Click here or drag an</span>
<span class="t" style="left:1857.4px;top:189.8px;font-size:25px;line-height:25px;color:#1d1b1c;letter-spacing:-0.01px;transform:scaleX(1.009);">image</span>
<span class="t" style="left:1829.1px;top:233.8px;font-size:25px;line-height:25px;color:#1d1b1c;letter-spacing:-0.02px;transform:scaleX(0.97);">Max 500KB</span>
<span class="t" style="left:1479.6px;top:396.5px;font-size:29px;line-height:29px;color:#2a2829;transform:scaleX(1.039);-webkit-text-stroke:0.1px #2a2829;">Owner</span>
<span class="t" style="left:1654.8px;top:394.5px;font-size:29px;line-height:29px;color:#1d1b1c;letter-spacing:0.61px;transform:scaleX(1.07);-webkit-text-stroke:0.8px #1d1b1c;">admin</span>
<span class="t" style="left:1479.4px;top:466.5px;font-size:29px;line-height:29px;color:#2a2829;letter-spacing:0.44px;transform:scaleX(1.07);-webkit-text-stroke:0.1px #2a2829;">Created</span>
<span class="t" style="left:1655.6px;top:464.5px;font-size:29px;line-height:29px;color:#1d1b1c;transform:scaleX(1.015);-webkit-text-stroke:0.8px #1d1b1c;">Jul 21, 2025, 2:07:31 PM</span>
<span class="t" style="left:1478.5px;top:536.5px;font-size:29px;line-height:29px;color:#2a2829;letter-spacing:0.58px;transform:scaleX(1.07);-webkit-text-stroke:0.1px #2a2829;">Last connection</span>
<span class="t" style="left:1481.0px;top:604.5px;font-size:29px;line-height:29px;color:#1d1b1c;transform:scaleX(1.01);-webkit-text-stroke:0.8px #1d1b1c;">Aug 12, 2025, 11:59:12 AM</span>
<span class="t" style="left:83.2px;top:716.5px;font-size:29px;line-height:29px;color:#1d1b1c;font-weight:700;letter-spacing:-0.21px;transform:scaleX(0.97);">Export</span>
<span class="t" style="left:271.1px;top:716.5px;font-size:29px;line-height:29px;color:#a3a3a3;font-weight:700;transform:scaleX(0.982);">Import</span>
<span class="t" style="left:460.1px;top:716.5px;font-size:29px;line-height:29px;color:#1d1b1c;font-weight:700;letter-spacing:0.01px;transform:scaleX(0.986);">Duplicate</span>
<span class="t" style="left:687.7px;top:716.5px;font-size:29px;line-height:29px;color:#a3a3a3;font-weight:700;letter-spacing:0.01px;transform:scaleX(0.987);">Promote</span>
</section>
<section class="danger">
<div class="hl"></div>
<span class="t" style="left:30.3px;top:41.7px;font-size:32px;line-height:32px;color:#c4352f;font-weight:700;letter-spacing:0.96px;transform:scaleX(1.07);-webkit-text-stroke:0.5px #c4352f;">Danger Zone</span>
<span class="t" style="left:31.1px;top:146.5px;font-size:29px;line-height:29px;color:#1d1b1c;transform:scaleX(1.057);-webkit-text-stroke:0.1px #1d1b1c;">Stop the API. It will no longer be available on all gateways.</span>
<span class="t" style="left:1863.7px;top:146.5px;font-size:29px;line-height:29px;color:#c4352f;transform:scaleX(1.029);-webkit-text-stroke:0.5px #c4352f;">Stop the API</span>
<span class="t" style="left:30.0px;top:242.5px;font-size:29px;line-height:29px;color:#1d1b1c;letter-spacing:0.19px;transform:scaleX(1.07);-webkit-text-stroke:0.1px #1d1b1c;">Publish the API. It will be available on portal (depending on visibility/rights).</span>
<span class="t" style="left:1827.1px;top:242.5px;font-size:29px;line-height:29px;color:#c4352f;letter-spacing:-0.01px;transform:scaleX(1.03);-webkit-text-stroke:0.5px #c4352f;">Publish the API</span>
<span class="t" style="left:30.1px;top:338.5px;font-size:29px;line-height:29px;color:#1d1b1c;transform:scaleX(1.054);-webkit-text-stroke:0.1px #1d1b1c;">Make this API public. Everyone can see it.</span>
<span class="t" style="left:1867.1px;top:338.5px;font-size:29px;line-height:29px;color:#c4352f;letter-spacing:-0.01px;transform:scaleX(1.017);-webkit-text-stroke:0.5px #c4352f;">Make Public</span>
<span class="t" style="left:30.0px;top:434.5px;font-size:29px;line-height:29px;color:#1d1b1c;letter-spacing:0.06px;transform:scaleX(1.07);-webkit-text-stroke:0.1px #1d1b1c;">Deprecate this API. It will no longer be published on portal.</span>
<span class="t" style="left:1886.5px;top:434.5px;font-size:29px;line-height:29px;color:#c4352f;transform:scaleX(1.059);-webkit-text-stroke:0.5px #c4352f;">Deprecate</span>
<span class="t" style="left:30.0px;top:530.5px;font-size:29px;line-height:29px;color:#1d1b1c;letter-spacing:0.01px;transform:scaleX(1.07);-webkit-text-stroke:0.1px #1d1b1c;">Delete this API. A running or published API cannot be deleted</span>
<span class="t" style="left:1934.5px;top:530.5px;font-size:29px;line-height:29px;color:#a3a3a3;letter-spacing:0.01px;transform:scaleX(1.07);-webkit-text-stroke:0.5px #a3a3a3;">Delete</span>
</section>
</main>
<div class="sbar"><div class="thumb"></div></div>
</body>
</html>
